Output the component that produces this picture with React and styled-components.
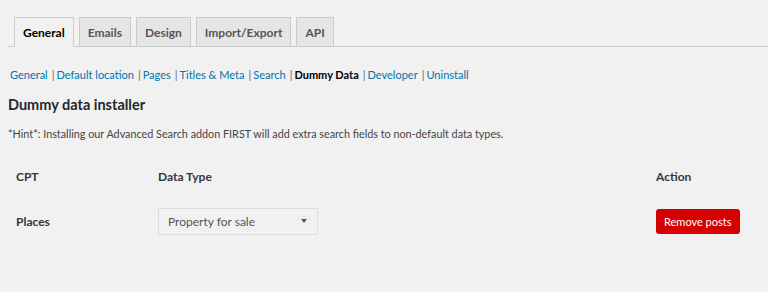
import React from "react";
import styled, { createGlobalStyle } from "styled-components";

const GlobalStyle = createGlobalStyle`
  html, body {
    margin: 0;
    padding: 0;
    background: #f1f1f1;
    font-family: Lato, "Open Sans", sans-serif;
    color: #23282d;
  }
`;

const Page = styled.div`
  padding: 0 0 0 8px;
`;

const TabBar = styled.div`
  display: flex;
  gap: 5px;
  padding: 17px 0 0 6px;
  border-bottom: 1px solid #ccc;
`;

const Tab = styled.div`
  height: 28px;
  padding: 0 8px;
  display: flex;
  align-items: center;
  font-size: 12px;
  font-weight: 700;
  border: 1px solid #ccc;
  border-bottom: none;
  margin-bottom: -1px;
  background: ${(p) => (p.$active ? "#f1f1f1" : "#e5e5e5")};
  color: ${(p) => (p.$active ? "#000" : "#555")};
  ${(p) => p.$active && "border-bottom: 1px solid #f1f1f1;"}
`;

const SubNav = styled.div`
  display: flex;
  align-items: center;
  padding: 19px 0 0 2px;
  font-size: 11px;
  color: #666;
  height: 16px;
`;

const SubLink = styled.span`
  color: ${(p) => (p.$current ? "#000" : "#0073aa")};
  font-weight: ${(p) => (p.$current ? 700 : 400)};
`;

const Sep = styled.span`
  margin: 0 2px 0 4px;
  color: #666;
`;

const Heading = styled.h2`
  margin: 14px 0 0;
  font-size: 14.5px;
  font-weight: 700;
  color: #23282d;
`;

const Hint = styled.p`
  margin: 14px 0 0;
  font-size: 10.8px;
  color: #444;
`;

const Table = styled.div`
  display: grid;
  grid-template-columns: 142px 498px 1fr;
  margin: 14px 0 0 8px;
`;

const HeadCell = styled.div`
  font-size: 12px;
  font-weight: 700;
  color: #32373c;
  height: 44px;
  display: flex;
  align-items: center;
`;

const Cell = styled.div`
  font-size: 12px;
  font-weight: ${(p) => (p.$bold ? 700 : 400)};
  color: #32373c;
  height: 46px;
  display: flex;
  align-items: center;
`;

const Select = styled.div`
  width: 160px;
  height: 27px;
  box-sizing: border-box;
  border: 1px solid #ddd;
  background: #f1f1f1;
  display: flex;
  align-items: center;
  justify-content: space-between;
  padding: 0 10px 0 9px;
  font-size: 12px;
  color: #555;
`;

const Caret = styled.span`
  width: 0;
  height: 0;
  border-left: 3.5px solid transparent;
  border-right: 3.5px solid transparent;
  border-top: 4px solid #555;
`;

const RemoveButton = styled.button`
  height: 25px;
  padding: 0 8px;
  border: none;
  border-radius: 3px;
  background: #d60000;
  color: #fff;
  font-family: inherit;
  font-size: 11px;
`;

const tabs = ["General", "Emails", "Design", "Import/Export", "API"];
const links = [
  "General",
  "Default location",
  "Pages",
  "Titles & Meta",
  "Search",
  "Dummy Data",
  "Developer",
  "Uninstall",
];

export default function App() {
  return (
    <>
      <GlobalStyle />
      <Page>
        <TabBar>
          {tabs.map((t, i) => (
            <Tab key={t} $active={i === 0}>
              {t}
            </Tab>
          ))}
        </TabBar>
        <SubNav>
          {links.map((l, i) => (
            <React.Fragment key={l}>
              {i > 0 && <Sep>|</Sep>}
              <SubLink $current={l === "Dummy Data"}>{l}</SubLink>
            </React.Fragment>
          ))}
        </SubNav>
        <Heading>Dummy data installer</Heading>
        <Hint>
          *Hint*: Installing our Advanced Search addon FIRST will add extra
          search fields to non-default data types.
        </Hint>
        <Table>
          <HeadCell>CPT</HeadCell>
          <HeadCell>Data Type</HeadCell>
          <HeadCell>Action</HeadCell>
          <Cell $bold>Places</Cell>
          <Cell>
            <Select>
              Property for sale
              <Caret />
            </Select>
          </Cell>
          <Cell>
            <RemoveButton>Remove posts</RemoveButton>
          </Cell>
        </Table>
      </Page>
    </>
  );
}
